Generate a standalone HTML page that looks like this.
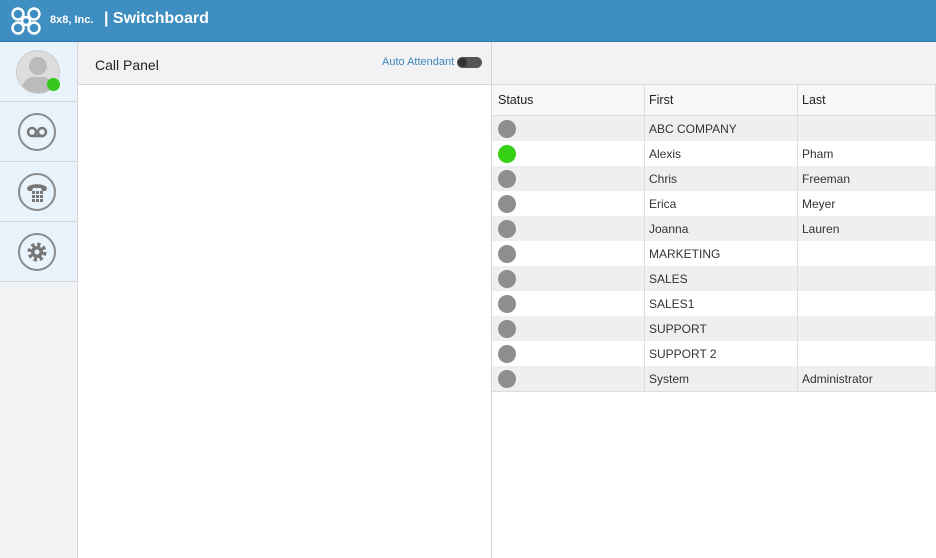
<!DOCTYPE html>
<html><head><style>
body{margin:0;width:936px;height:558px;overflow:hidden;font-family:"Liberation Sans",sans-serif;background:#fff;position:relative}
.hdr{position:absolute;left:0;top:0;width:936px;height:41px;background:#3f8ec2;border-bottom:1px solid #2f76a6}
.side{position:absolute;left:0;top:42px;width:77px;height:516px;background:#f1f2f4;border-right:1px solid #d4d6d9}
.si{height:59px;background:#e9f3fb;border-bottom:1px solid #cfd5db;position:relative}
.ic{position:absolute;left:18px;top:11px;width:34px;height:34px;border:2px solid #8a8a8a;border-radius:50%}
.ic svg{position:absolute;left:1px;top:1px}
.cp{position:absolute;left:78px;top:42px;width:413px;height:42px;background:#f2f2f4;border-bottom:1px solid #d8d8d8}
.rp{position:absolute;left:492px;top:42px;width:444px;height:42px;background:#f2f2f4;border-bottom:1px solid #d8d8d8}
.vl{position:absolute;left:491px;top:42px;width:1px;height:516px;background:#d4d4d4}
table{position:absolute;left:492px;top:85px;width:444px;border-collapse:collapse;font-size:12px;color:#333}
td,th{height:25px;padding:0 4px;border-right:1px solid #ddd;text-align:left;font-weight:normal}
th{height:30px;background:#f7f7f7;border-bottom:1px solid #ddd;font-size:12.5px;color:#222}
td:first-child,th:first-child{width:142px;padding-left:6px}
td:nth-child(2),th:nth-child(2){width:144px}
.d{display:inline-block;width:18px;height:18px;border-radius:50%;background:#8e8e8e;vertical-align:middle}
tbody tr:last-child td{border-bottom:1px solid #ddd}
tbody tr:nth-child(odd) td{background:#efeff1}tbody tr:nth-child(even) td{background:#fff}
</style></head><body>
<div class="hdr">
<svg style="position:absolute;left:10px;top:6px" width="32" height="30" viewBox="0 0 32 30" fill="none" stroke="#fff" stroke-width="2.4"><circle cx="8" cy="8" r="5.5"/><circle cx="24" cy="8" r="5.5"/><circle cx="8" cy="22" r="5.5"/><circle cx="24" cy="22" r="5.5"/><circle cx="16" cy="15" r="4"/></svg>
<span style="position:absolute;left:50px;top:14px;color:#fff;font-size:11px;font-weight:bold">8x8, Inc.</span>
<span style="position:absolute;left:104px;top:10px;color:#fff;font-size:16px;font-weight:bold">| Switchboard</span>
</div>
<div class="side">
<div class="si"><div style="position:absolute;left:16px;top:8px;width:42px;height:42px;border-radius:50%;background:#ddd;border:1px solid #ccc;overflow:hidden"><div style="position:absolute;left:12px;top:6px;width:18px;height:18px;border-radius:50%;background:#bbb"></div><div style="position:absolute;left:5px;top:26px;width:32px;height:24px;border-radius:12px 12px 0 0;background:#bbb"></div></div><div style="position:absolute;left:47px;top:36px;width:13px;height:13px;border-radius:50%;background:#35c71c"></div></div>
<div class="si"><div class="ic"><svg width="32" height="32" viewBox="0 0 32 32" fill="none" stroke="#777" stroke-width="2.5"><circle cx="11" cy="16" r="4"/><circle cx="21" cy="16" r="4"/><line x1="11" y1="20" x2="21" y2="20"/></svg></div></div>
<div class="si"><div class="ic"><svg width="32" height="32" viewBox="0 0 32 32" fill="#777"><path d="M6 12c2-5 18-5 20 0l-1 3h-4l-1-3h-8l-1 3H7z"/><rect x="11" y="15" width="3" height="3"/><rect x="15" y="15" width="3" height="3"/><rect x="19" y="15" width="3" height="3"/><rect x="11" y="19" width="3" height="3"/><rect x="15" y="19" width="3" height="3"/><rect x="19" y="19" width="3" height="3"/><rect x="11" y="23" width="3" height="3"/><rect x="15" y="23" width="3" height="3"/><rect x="19" y="23" width="3" height="3"/></svg></div></div>
<div class="si"><div class="ic"><svg width="32" height="32" viewBox="0 0 32 32"><circle cx="16" cy="16" r="7" fill="none" stroke="#777" stroke-width="5" stroke-dasharray="3 2.5"/><circle cx="16" cy="16" r="6" fill="#777"/><circle cx="16" cy="16" r="2.5" fill="#e9f3fb"/></svg></div></div>
</div>
<div class="cp"><span style="position:absolute;left:17px;top:15px;font-size:14px;color:#222">Call Panel</span>
<span style="position:absolute;left:304px;top:14px;font-size:11px;color:#3d87bd">Auto Attendant</span>
<div style="position:absolute;left:379px;top:15px;width:25px;height:11px;border-radius:6px;background:#555"><div style="position:absolute;left:1px;top:1px;width:9px;height:9px;border-radius:50%;background:#333"></div></div></div>
<div class="rp"></div>
<div class="vl"></div>
<table><thead><tr><th>Status</th><th>First</th><th>Last</th></tr></thead><tbody>
<tr><td><span class="d"></span></td><td>ABC COMPANY</td><td></td></tr>
<tr><td><span class="d" style="background:#36d014"></span></td><td>Alexis</td><td>Pham</td></tr>
<tr><td><span class="d"></span></td><td>Chris</td><td>Freeman</td></tr>
<tr><td><span class="d"></span></td><td>Erica</td><td>Meyer</td></tr>
<tr><td><span class="d"></span></td><td>Joanna</td><td>Lauren</td></tr>
<tr><td><span class="d"></span></td><td>MARKETING</td><td></td></tr>
<tr><td><span class="d"></span></td><td>SALES</td><td></td></tr>
<tr><td><span class="d"></span></td><td>SALES1</td><td></td></tr>
<tr><td><span class="d"></span></td><td>SUPPORT</td><td></td></tr>
<tr><td><span class="d"></span></td><td>SUPPORT 2</td><td></td></tr>
<tr><td><span class="d"></span></td><td>System</td><td>Administrator</td></tr>
</tbody></table>
</body></html>
